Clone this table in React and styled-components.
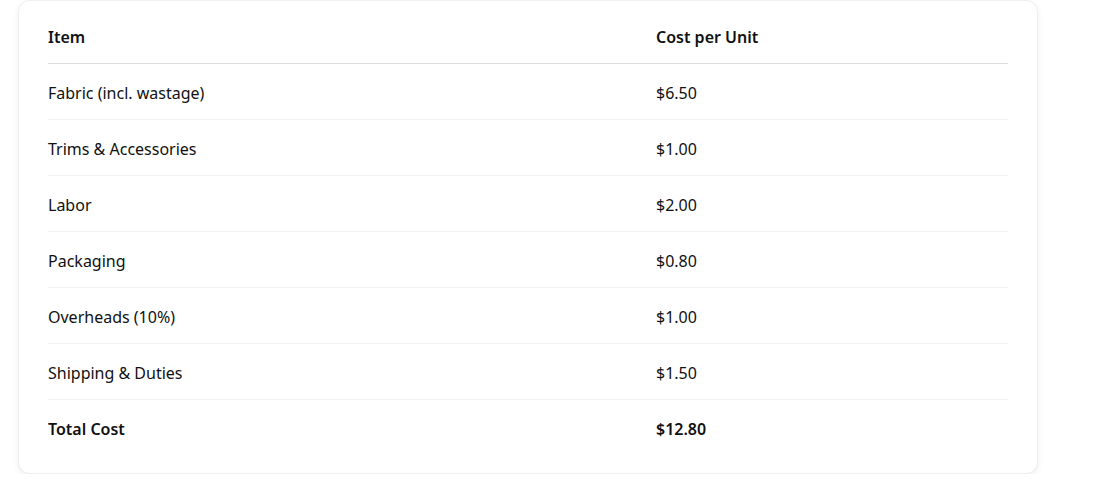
import React from "react";
import styled, { createGlobalStyle } from "styled-components";

const Global = createGlobalStyle`
  html, body { margin: 0; padding: 0; background: #ffffff; }
  body { font-family: "Segoe UI", "Noto Sans", sans-serif; color: #111111; }
`;

const Page = styled.div`
  padding: 0 60px 0 18px;
  width: 1098px;
  box-sizing: border-box;
`;

const Card = styled.div`
  width: 1020px;
  box-sizing: border-box;
  background: #ffffff;
  border: 1px solid #efefef;
  border-radius: 12px;
  box-shadow: 0 2px 6px rgba(0, 0, 0, 0.07);
  padding: 7px 29px 17px;
`;

const Table = styled.div`
  display: grid;
  grid-template-columns: 608px 1fr;
`;

const Cell = styled.div`
  height: 56px;
  display: flex;
  align-items: center;
  padding-top: 2px;
  font-size: 16px;
  font-weight: ${(p) => (p.$bold ? 600 : 400)};
  border-bottom: ${(p) =>
    p.$head ? "1px solid #dddddd" : p.$last ? "none" : "1px solid #f1f1f1"};
  box-sizing: border-box;
`;

const rows = [
  ["Fabric (incl. wastage)", "$6.50"],
  ["Trims & Accessories", "$1.00"],
  ["Labor", "$2.00"],
  ["Packaging", "$0.80"],
  ["Overheads (10%)", "$1.00"],
  ["Shipping & Duties", "$1.50"],
];

export default function App() {
  return (
    <Page>
      <Global />
      <Card>
        <Table>
          <Cell $head $bold>Item</Cell>
          <Cell $head $bold>Cost per Unit</Cell>
          {rows.map(([a, b]) => (
            <React.Fragment key={a}>
              <Cell>{a}</Cell>
              <Cell>{b}</Cell>
            </React.Fragment>
          ))}
          <Cell $bold $last>Total Cost</Cell>
          <Cell $bold $last>$12.80</Cell>
        </Table>
      </Card>
    </Page>
  );
}
